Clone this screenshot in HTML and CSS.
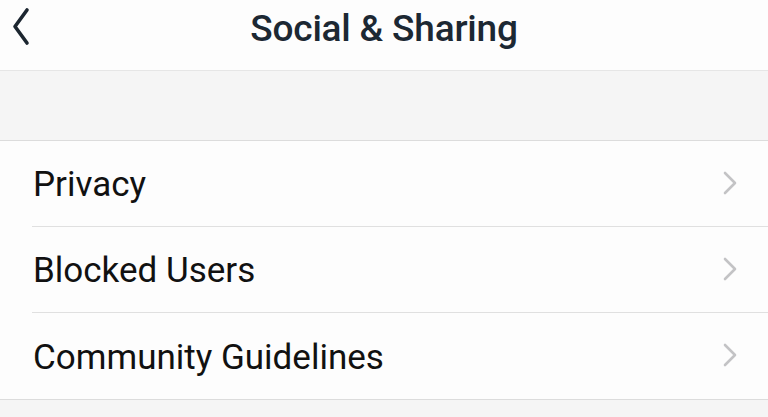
FILE: index.html
```html
<!DOCTYPE html>
<html>
    <head>
    <title>Social &amp; Sharing</title>
    <meta charset="UTF-8">
    <meta name="viewport" content="width=device-width, initial-scale=1.0">
    <link rel="stylesheet" href="styles.css">
    </head>

    <body>
        <div class="cabecera">
            <button class="atras">
                <svg width="20" height="40" viewBox="0 0 20 40">
                    <path d="M16 3 L4 19.5 L16 36" fill="none" stroke="#1c2630" stroke-width="3.6" stroke-linecap="round" stroke-linejoin="round"/>
                </svg>
            </button>
            <h1 class="titulo">Social &amp; Sharing</h1>
        </div>

        <div class="banda"></div>

        <div class="lista">
            <div class="fila">
                <span class="texto">Privacy</span>
                <svg class="flecha" width="16" height="26" viewBox="0 0 16 26"><path d="M3 3 L13 13 L3 23" fill="none" stroke="#c3c3c5" stroke-width="2.6" stroke-linecap="round" stroke-linejoin="round"/></svg>
            </div>
            <div class="fila">
                <span class="texto">Blocked Users</span>
                <svg class="flecha" width="16" height="26" viewBox="0 0 16 26"><path d="M3 3 L13 13 L3 23" fill="none" stroke="#c3c3c5" stroke-width="2.6" stroke-linecap="round" stroke-linejoin="round"/></svg>
            </div>
            <div class="fila">
                <span class="texto">Community Guidelines</span>
                <svg class="flecha" width="16" height="26" viewBox="0 0 16 26"><path d="M3 3 L13 13 L3 23" fill="none" stroke="#c3c3c5" stroke-width="2.6" stroke-linecap="round" stroke-linejoin="round"/></svg>
            </div>
        </div>
    </body>
</html>
```

FILE: styles.css
```css
body{
    margin: 0;
    background-color: #f5f5f5;
    font-family: Roboto, "Liberation Sans", sans-serif;
}

.cabecera{
    display: flex;
    align-items: center;
    justify-content: center;
    height: 70px;
    background-color: #fdfdfd;
    border-bottom: 1px solid #e6e6e6;
    position: relative;
}

.atras{
    position: absolute;
    left: 11px;
    top: 7px;
    border: none;
    background: none;
    padding: 0;
}

.titulo{
    margin: 0;
    font-size: 37px;
    font-weight: 500;
    color: #1c2833;
    letter-spacing: -0.2px;
    padding-bottom: 14px;
}

.banda{
    height: 69px;
    border-bottom: 1px solid #dcdcdc;
}

.lista{
    background-color: #fdfdfd;
    padding-left: 32px;
    border-bottom: 1px solid #dcdcdc;
}

.fila{
    display: flex;
    align-items: center;
    justify-content: space-between;
    height: 85px;
    padding-right: 30px;
    border-bottom: 1px solid #e0e0e0;
}

.fila:last-child{
    border-bottom: none;
    height: 86px;
}

.texto{
    font-size: 35px;
    color: #111111;
    padding-left: 1px;
    padding-top: 2px;
}

.flecha{
    margin-top: -2px;
}
```
